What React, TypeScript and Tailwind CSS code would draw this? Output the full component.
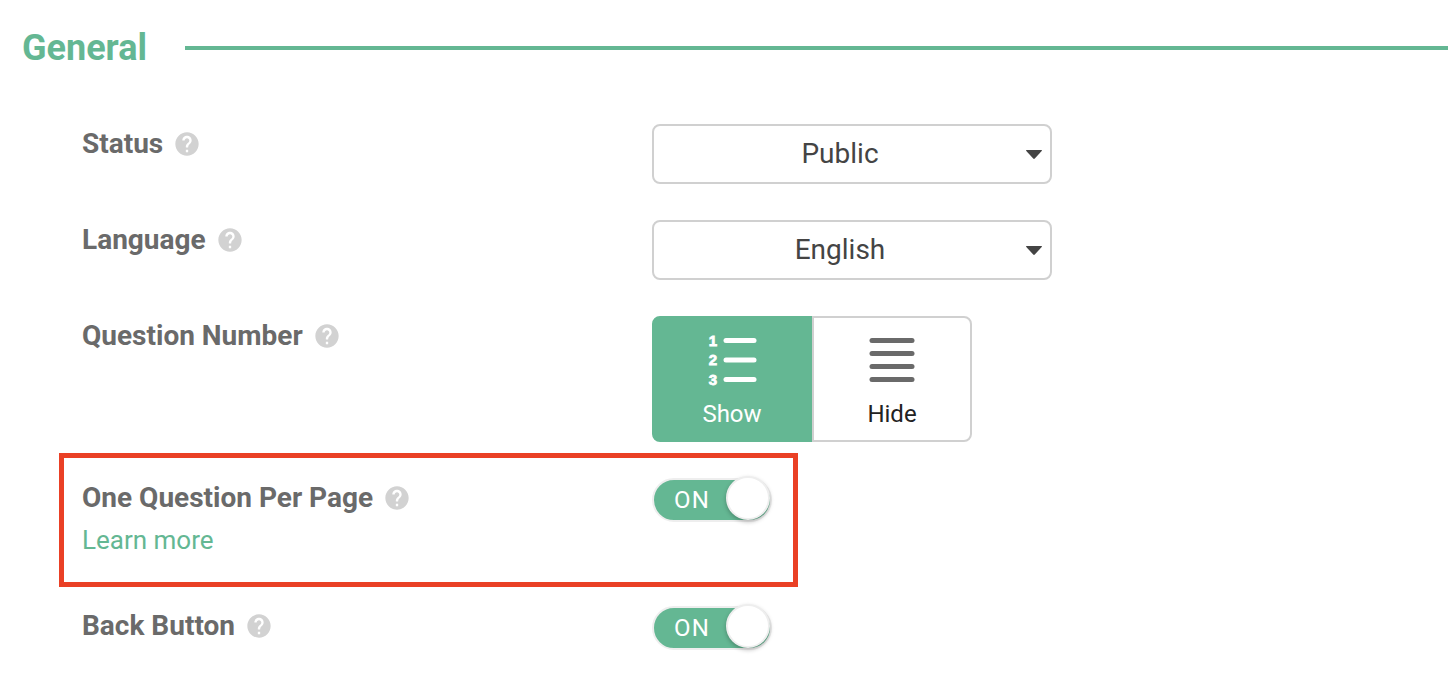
import { useId, useState, type ReactNode } from 'react'
import { MdHelp } from 'react-icons/md'

interface RowProps { label: string; htmlFor?: string; link?: string; highlighted?: boolean; className?: string; children: ReactNode }

function SettingRow({ label, htmlFor, link, highlighted, className = '', children }: RowProps) {
  return (
    <div className={`relative grid grid-cols-[570px_1fr] items-start ${className}`}>
      <div>
        <div className="flex h-10 items-center gap-[10px]">
          <label htmlFor={htmlFor} className="text-[28px] leading-10 font-bold text-[#6a6a6a]">{label}</label>
          <button type="button" aria-label={`Help: ${label}`} className="text-[#d2d2d2]">
            <MdHelp size={28} />
          </button>
        </div>
        {link && (
          <a href="#learn-more" className="block text-[26px] leading-[44px] text-[#64b793]">{link}</a>
        )}
      </div>
      <div>{children}</div>
      {highlighted && (
        <div className="pointer-events-none absolute -top-[25px] -left-[23px] h-[134px] w-[739px] border-5 border-[#ea4025]" />
      )}
    </div>
  )
}

function Dropdown({ id, options }: { id: string; options: string[] }) {
  return (
    <div className="relative w-[400px]">
      <select
        id={id}
        className="block h-[60px] w-full appearance-none rounded-lg border-2 border-[#d0d0d0] bg-white pr-6 text-center text-[28px] text-[#444] [text-align-last:center]"
      >
        {options.map((o) => <option key={o}>{o}</option>)}
      </select>
      <svg viewBox="0 0 16 9" className="pointer-events-none absolute top-[26px] right-[10px] h-[9px] w-4 fill-[#444]">
        <path d="M0.6 0h14.8q1 0.2 0.3 1.1L8.8 8.5q-0.8 0.8-1.6 0L0.3 1.1Q-0.4 0.2 0.6 0z" />
      </svg>
    </div>
  )
}

function NumberedIcon() {
  return (
    <svg viewBox="0 -5 50 60" className="h-[60px] w-[50px] fill-current" aria-hidden="true">
      <g fontFamily="Liberation Sans, sans-serif" fontWeight="700" fontSize="15" textAnchor="middle" stroke="currentColor" strokeWidth="0.8">
        <text x="6" y="11">1</text>
        <text x="6" y="30">2</text>
        <text x="6" y="50">3</text>
      </g>
      <rect x="16.5" y="3" width="33" height="5" rx="2.5" />
      <rect x="16.5" y="22.5" width="33" height="5" rx="2.5" />
      <rect x="16.5" y="42" width="33" height="5" rx="2.5" />
    </svg>
  )
}

function LinesIcon() {
  return (
    <svg viewBox="0 -5 50 60" className="h-[60px] w-[50px] fill-[#6a6a6a]" aria-hidden="true">
      <rect x="2.5" y="3" width="45" height="5" rx="2.5" />
      <rect x="2.5" y="16" width="45" height="5" rx="2.5" />
      <rect x="2.5" y="29" width="45" height="5" rx="2.5" />
      <rect x="2.5" y="42" width="45" height="5" rx="2.5" />
    </svg>
  )
}

function NumberChoice() {
  const [value, setValue] = useState('show')
  const on = 'border-[#64b793] bg-[#64b793] text-white'
  const off = 'border-[#d0d0d0] bg-white text-[#222]'
  const base = 'flex h-[126px] w-40 cursor-pointer flex-col items-center gap-2 border-2 pt-3 text-2xl'

  return (
    <div role="radiogroup" aria-label="Question Number" className="flex">
      <label className={`${base} rounded-l-lg ${value === 'show' ? on : off}`}>
        <input type="radio" name="numbers" className="sr-only" checked={value === 'show'} onChange={() => setValue('show')} />
        <NumberedIcon />
        <span>Show</span>
      </label>
      <label className={`${base} rounded-r-lg ${value === 'hide' ? on : off}`}>
        <input type="radio" name="numbers" className="sr-only" checked={value === 'hide'} onChange={() => setValue('hide')} />
        <LinesIcon />
        <span>Hide</span>
      </label>
    </div>
  )
}

function Toggle({ id }: { id: string }) {
  const [on, setOn] = useState(true)
  return (
    <label
      htmlFor={id}
      className={`relative flex h-11 w-[120px] cursor-pointer items-center rounded-full border-2 border-[#eee] ${on ? 'bg-[#64b793] pl-5 text-white' : 'justify-end bg-white pr-5 text-[#6a6a6a]'}`}
    >
      <input id={id} type="checkbox" role="switch" className="sr-only" checked={on} onChange={() => setOn(!on)} />
      <span className="text-2xl tracking-wider">{on ? 'ON' : 'OFF'}</span>
      {/* Knob */}
      <span className={`absolute -top-1 size-11 rounded-full border-2 border-[#eee] bg-white shadow-[0_2px_4px_rgba(0,0,0,0.25)] ${on ? 'right-0' : 'left-0'}`} />
    </label>
  )
}

export default function App() {
  const id = useId()

  return (
    <main className="bg-white font-[Roboto,sans-serif]">
      <div className="flex items-center pt-6 pl-[22px]">
        <h1 className="w-[163px] text-4xl leading-12 font-bold text-[#64b793]">General</h1>
        <div className="h-1 flex-1 bg-[#64b793]" />
      </div>

      <div className="flex flex-col gap-9 pt-[52px] pb-8 pl-[82px]">
        <SettingRow label="Status" htmlFor={`${id}-status`}>
          <Dropdown id={`${id}-status`} options={['Public', 'Private']} />
        </SettingRow>
        <SettingRow label="Language" htmlFor={`${id}-language`}>
          <Dropdown id={`${id}-language`} options={['English', 'French', 'German']} />
        </SettingRow>
        <SettingRow label="Question Number">
          <NumberChoice />
        </SettingRow>
        <SettingRow label="One Question Per Page" htmlFor={`${id}-single`} link="Learn more" highlighted className="min-h-[92px]">
          <Toggle id={`${id}-single`} />
        </SettingRow>
        <SettingRow label="Back Button" htmlFor={`${id}-back`}>
          <Toggle id={`${id}-back`} />
        </SettingRow>
      </div>
    </main>
  )
}
